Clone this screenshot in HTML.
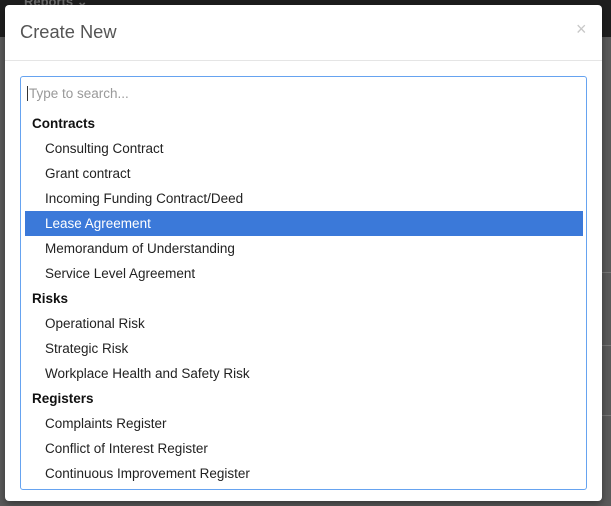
<!DOCTYPE html>
<html><head><style>
body{margin:0;width:611px;height:506px;overflow:hidden;background:#5a5a5a;font-family:"Liberation Sans",sans-serif;position:relative}
.top{position:absolute;left:0;top:0;width:611px;height:37px;background:#1e1e1e}
.rep{position:absolute;left:24px;top:-6px;color:#6a6a6a;font-size:13px;font-weight:bold}
.line{position:absolute;left:600px;width:11px;height:1px;background:#777}
.modal{position:absolute;left:5px;top:5px;width:597px;height:496px;background:#fff;border-radius:4px;box-shadow:0 3px 8px rgba(0,0,0,.4)}
.title{position:absolute;left:15px;top:16px;font-size:18.3px;color:#555}
.x{position:absolute;left:571px;top:14px;font-size:18px;color:#c8c8c8}
.hr{position:absolute;left:0;top:55px;width:597px;height:1px;background:#e5e5e5}
.box{position:absolute;left:15px;top:71px;width:565px;height:412px;border:1px solid #66a3f0;border-radius:3px}
.inp{position:absolute;left:6px;top:9px;font-size:13.5px;color:#999;border-left:1px solid #333;padding-left:1px;line-height:15px}
.list{position:absolute;left:4px;top:34px;width:558px}
.r{height:25px;line-height:25px;font-size:13.5px;color:#222;padding-left:20px}
.g{font-weight:bold;padding-left:7px;color:#111}
.sel{background:#3b79d9;color:#fff}
</style></head><body>
<div class="top"><div class="rep">Reports ⌄</div></div>
<div class="line" style="top:272px"></div><div class="line" style="top:345px"></div><div class="line" style="top:415px"></div>
<div class="modal">
<div class="title">Create New</div><div class="x">×</div>
<div class="hr"></div>
<div class="box">
<div class="inp">Type to search...</div>
<div class="list">
<div class="r g">Contracts</div>
<div class="r">Consulting Contract</div>
<div class="r">Grant contract</div>
<div class="r">Incoming Funding Contract/Deed</div>
<div class="r sel">Lease Agreement</div>
<div class="r">Memorandum of Understanding</div>
<div class="r">Service Level Agreement</div>
<div class="r g">Risks</div>
<div class="r">Operational Risk</div>
<div class="r">Strategic Risk</div>
<div class="r">Workplace Health and Safety Risk</div>
<div class="r g">Registers</div>
<div class="r">Complaints Register</div>
<div class="r">Conflict of Interest Register</div>
<div class="r">Continuous Improvement Register</div>
</div></div></div>
</body></html>
